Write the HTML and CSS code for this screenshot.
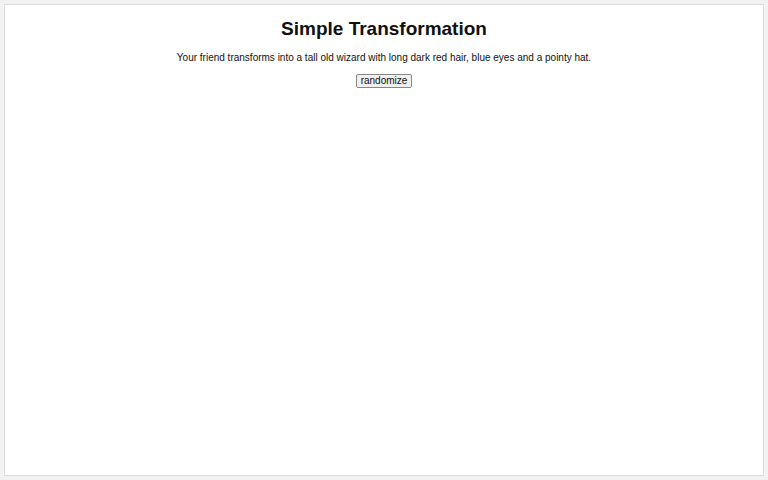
FILE: index.html
```html
<!DOCTYPE html>
<html>
<head>
    <title>Simple Transformation</title>
    <link rel="stylesheet" href="styles.css">
</head>
<body>
    <div class="panel">
        <h1 class="title">Simple Transformation</h1>
        <p class="result" id="result">Your friend transforms into a tall old wizard with long dark red hair, blue eyes and a pointy hat.</p>
        <button class="randomize" onclick="randomize()">randomize</button>
    </div>
    <script>
        function randomize() {
            const who = ['tall old wizard', 'tiny dragon', 'friendly giant', 'grey cat'];
            const hair = ['long dark red', 'short blond', 'curly black'];
            const eyes = ['blue', 'green', 'brown'];
            const pick = list => list[Math.floor(Math.random() * list.length)];
            document.getElementById('result').textContent =
                'Your friend transforms into a ' + pick(who) + ' with ' + pick(hair) +
                ' hair, ' + pick(eyes) + ' eyes and a pointy hat.';
        }
    </script>
</body>
</html>
```
FILE: styles.css
```css
html, body {
    height: 100%;
    margin: 0;
}

body {
    background: #f2f2f2;
    padding: 4px;
    box-sizing: border-box;
    font-family: "Liberation Sans", Arial, sans-serif;
}

.panel {
    height: 100%;
    box-sizing: border-box;
    background: white;
    border: 1px solid #dcdcdc;
    text-align: center;
    padding-top: 13px;
}

.title {
    margin: 0;
    font-size: 19px;
    line-height: 22px;
    color: #111;
}

.result {
    margin: 12px 0 6px;
    font-size: 10px;
    line-height: 12px;
    color: #111;
}

.randomize {
    font-family: "Liberation Sans", Arial, sans-serif;
    font-size: 10px;
    line-height: 12px;
    padding: 0 4px;
    border: 1px solid #888;
    border-radius: 2px;
    background: #efefef;
    color: #111;
}
```
